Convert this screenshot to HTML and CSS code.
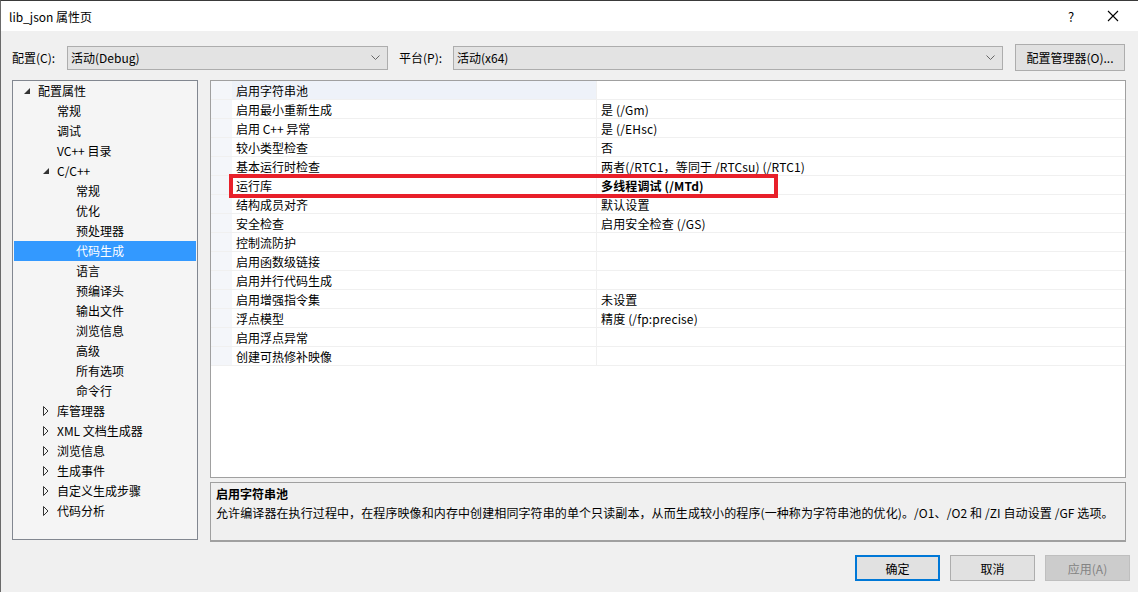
FILE: index.html
```html
<!DOCTYPE html>
<html>
<head>
  <meta charset="utf-8">
  <title>lib_json 属性页</title>
  <link rel="stylesheet" href="styles.css">
</head>
<body>
<div class="window">

  <div class="titlebar">
    <span class="title">lib_json 属性页</span>
    <span class="help">?</span>
    <span class="close">
      <svg width="12" height="12" viewBox="0 0 12 12"><path d="M1 1 L11 11 M11 1 L1 11" stroke="#000" stroke-width="1.1" fill="none"/></svg>
    </span>
  </div>

  <div class="toolbar">
    <span class="label cfg-label">配置(C):</span>
    <div class="combo cfg-combo">
      <span>活动(Debug)</span>
      <svg class="chev" width="9" height="5" viewBox="0 0 9 5"><path d="M0.5 0.5 L4.5 4.5 L8.5 0.5" stroke="#666" fill="none"/></svg>
    </div>
    <span class="label plat-label">平台(P):</span>
    <div class="combo plat-combo">
      <span>活动(x64)</span>
      <svg class="chev" width="9" height="5" viewBox="0 0 9 5"><path d="M0.5 0.5 L4.5 4.5 L8.5 0.5" stroke="#666" fill="none"/></svg>
    </div>
    <button class="btn mgr-btn">配置管理器(O)...</button>
  </div>

  <div class="main">
    <!-- left tree -->
    <div class="tree">
      <div class="node lv0"><svg class="arr" width="7" height="7" viewBox="0 0 7 7"><polygon points="6,0 6,6 0,6" fill="#333"/></svg>配置属性</div>
      <div class="node lv1">常规</div>
      <div class="node lv1">调试</div>
      <div class="node lv1">VC++ 目录</div>
      <div class="node lv1"><svg class="arr" width="7" height="7" viewBox="0 0 7 7"><polygon points="6,0 6,6 0,6" fill="#333"/></svg>C/C++</div>
      <div class="node lv2">常规</div>
      <div class="node lv2">优化</div>
      <div class="node lv2">预处理器</div>
      <div class="node lv2 selected">代码生成</div>
      <div class="node lv2">语言</div>
      <div class="node lv2">预编译头</div>
      <div class="node lv2">输出文件</div>
      <div class="node lv2">浏览信息</div>
      <div class="node lv2">高级</div>
      <div class="node lv2">所有选项</div>
      <div class="node lv2">命令行</div>
      <div class="node lv1"><svg class="arr closed" width="6" height="10" viewBox="0 0 6 10"><polygon points="0.5,0.5 5,5 0.5,9.5" stroke="#333" fill="none"/></svg>库管理器</div>
      <div class="node lv1"><svg class="arr closed" width="6" height="10" viewBox="0 0 6 10"><polygon points="0.5,0.5 5,5 0.5,9.5" stroke="#333" fill="none"/></svg>XML 文档生成器</div>
      <div class="node lv1"><svg class="arr closed" width="6" height="10" viewBox="0 0 6 10"><polygon points="0.5,0.5 5,5 0.5,9.5" stroke="#333" fill="none"/></svg>浏览信息</div>
      <div class="node lv1"><svg class="arr closed" width="6" height="10" viewBox="0 0 6 10"><polygon points="0.5,0.5 5,5 0.5,9.5" stroke="#333" fill="none"/></svg>生成事件</div>
      <div class="node lv1"><svg class="arr closed" width="6" height="10" viewBox="0 0 6 10"><polygon points="0.5,0.5 5,5 0.5,9.5" stroke="#333" fill="none"/></svg>自定义生成步骤</div>
      <div class="node lv1"><svg class="arr closed" width="6" height="10" viewBox="0 0 6 10"><polygon points="0.5,0.5 5,5 0.5,9.5" stroke="#333" fill="none"/></svg>代码分析</div>
    </div>

    <!-- right side: property grid + description -->
    <div class="right">
      <div class="grid">
        <div class="row active"><span class="gutter"></span><span class="name">启用字符串池</span><span class="value"></span></div>
        <div class="row"><span class="gutter"></span><span class="name">启用最小重新生成</span><span class="value">是 (/Gm)</span></div>
        <div class="row"><span class="gutter"></span><span class="name">启用 C++ 异常</span><span class="value">是 (/EHsc)</span></div>
        <div class="row"><span class="gutter"></span><span class="name">较小类型检查</span><span class="value">否</span></div>
        <div class="row"><span class="gutter"></span><span class="name">基本运行时检查</span><span class="value">两者(/RTC1，等同于 /RTCsu) (/RTC1)</span></div>
        <div class="row"><span class="gutter"></span><span class="name">运行库</span><span class="value bold">多线程调试 (/MTd)</span></div>
        <div class="row"><span class="gutter"></span><span class="name">结构成员对齐</span><span class="value">默认设置</span></div>
        <div class="row"><span class="gutter"></span><span class="name">安全检查</span><span class="value">启用安全检查 (/GS)</span></div>
        <div class="row"><span class="gutter"></span><span class="name">控制流防护</span><span class="value"></span></div>
        <div class="row"><span class="gutter"></span><span class="name">启用函数级链接</span><span class="value"></span></div>
        <div class="row"><span class="gutter"></span><span class="name">启用并行代码生成</span><span class="value"></span></div>
        <div class="row"><span class="gutter"></span><span class="name">启用增强指令集</span><span class="value">未设置</span></div>
        <div class="row"><span class="gutter"></span><span class="name">浮点模型</span><span class="value">精度 (/fp:precise)</span></div>
        <div class="row"><span class="gutter"></span><span class="name">启用浮点异常</span><span class="value"></span></div>
        <div class="row"><span class="gutter"></span><span class="name">创建可热修补映像</span><span class="value"></span></div>
        <div class="highlight"></div>
      </div>
      <div class="desc">
        <div class="desc-title">启用字符串池</div>
        <div class="desc-text">允许编译器在执行过程中，在程序映像和内存中创建相同字符串的单个只读副本，从而生成较小的程序(一种称为字符串池的优化)。/O1、/O2 和 /ZI 自动设置 /GF 选项。</div>
      </div>
    </div>
  </div>

  <div class="footer">
    <button class="btn ok-btn">确定</button>
    <button class="btn">取消</button>
    <button class="btn disabled">应用(A)</button>
  </div>

</div>
</body>
</html>
```

FILE: styles.css
```css
html, body {
  margin: 0;
  padding: 0;
}

body {
  font-family: "Noto Sans CJK SC", "Liberation Sans", sans-serif;
  font-size: 12px;
  color: #000;
  background: #f0f0f0;
}

.window {
  width: 1138px;
  height: 592px;
  box-sizing: border-box;
  border-top: 1px solid #3a3a3a;
  border-left: 1px solid #6a6a6a;
  background: #f0f0f0;
  overflow: hidden;
}

/* title bar */
.titlebar {
  height: 30px;
  background: #fff;
  display: flex;
  align-items: center;
  padding-left: 8px;
}

.title {
  flex: 1;
  font-size: 12px;
}

.help {
  width: 20px;
  margin-right: 26px;
  font-size: 13px;
  text-align: center;
}

.close {
  width: 12px;
  margin-right: 19px;
  display: flex;
}

/* config row */
.toolbar {
  display: flex;
  align-items: center;
  height: 27px;
  margin-top: 13px;
  padding-left: 11px;
}

.label {
  white-space: nowrap;
}

.cfg-label {
  width: 55px;
}

.plat-label {
  width: 54px;
  margin-left: 11px;
}

.combo {
  height: 24px;
  box-sizing: border-box;
  border: 1px solid #adadad;
  background: #e3e3e3;
  display: flex;
  align-items: center;
  padding: 0 7px 0 3px;
}

.combo span {
  flex: 1;
}

.cfg-combo {
  width: 321px;
}

.plat-combo {
  width: 550px;
}

.btn {
  font-family: inherit;
  font-size: 12px;
  color: #000;
  background: #e1e1e1;
  border: 1px solid #adadad;
  padding: 0;
  height: 26px;
  width: 85px;
  box-sizing: border-box;
}

.mgr-btn {
  width: 110px;
  height: 27px;
  margin-left: 12px;
}

/* main area */
.main {
  display: flex;
  height: 462px;
  margin-top: 9px;
  padding: 0 12px 0 11px;
}

.tree {
  width: 186px;
  height: 460px;
  box-sizing: border-box;
  border: 1px solid #828790;
  background: #f5f5f5;
  margin-right: 12px;
}

.node {
  height: 20px;
  line-height: 20px;
  position: relative;
  white-space: nowrap;
  margin: 0 1px;
}

.lv0 { padding-left: 24px; }
.lv1 { padding-left: 43px; }
.lv2 { padding-left: 62px; }

.node .arr {
  position: absolute;
  top: 7px;
}

.lv0 .arr { left: 10px; }
.lv1 .arr { left: 29px; }

.node .arr.closed {
  top: 5px;
}

.node.selected {
  background: #3399ff;
  color: #fff;
}

.right {
  flex: 1;
  display: flex;
  flex-direction: column;
}

/* property grid */
.grid {
  position: relative;
  height: 398px;
  box-sizing: border-box;
  border: 1px solid #a0a0a0;
  background: #fff;
}

.row {
  display: flex;
  height: 19px;
  box-sizing: border-box;
  border-bottom: 1px solid #f0f0f0;
  line-height: 18px;
}

.row span {
  padding-top: 1px;
  box-sizing: border-box;
}

.gutter {
  width: 21px;
  background: #f4f6fa;
}

.name {
  width: 364px;
  padding-left: 4px;
  white-space: nowrap;
}

.value {
  flex: 1;
  padding-left: 4px;
  border-left: 1px solid #f0f0f0;
  white-space: nowrap;
  letter-spacing: 0.15px;
}

.row.active .name {
  background: #eef2f9;
}

.bold {
  font-weight: bold;
}

/* red annotation box */
.highlight {
  position: absolute;
  left: 18px;
  top: 93px;
  width: 549px;
  height: 24px;
  box-sizing: border-box;
  border: 4px solid #e8202a;
}

/* description box */
.desc {
  margin-top: 4px;
  height: 60px;
  box-sizing: border-box;
  border: 1px solid #a0a0a0;
  border-bottom: 2px solid #a0a0a0;
  padding: 1px 5px;
  line-height: 19px;
}

.desc-title {
  font-weight: bold;
}

.desc-text {
  white-space: nowrap;
  letter-spacing: 0.1px;
}

/* dialog buttons */
.footer {
  display: flex;
  justify-content: flex-end;
  gap: 10px;
  margin-top: 13px;
  padding-right: 8px;
}

.ok-btn {
  border: 2px solid #0078d7;
}

.btn.disabled {
  background: #cccccc;
  border-color: #bfbfbf;
  color: #838383;
}
```
